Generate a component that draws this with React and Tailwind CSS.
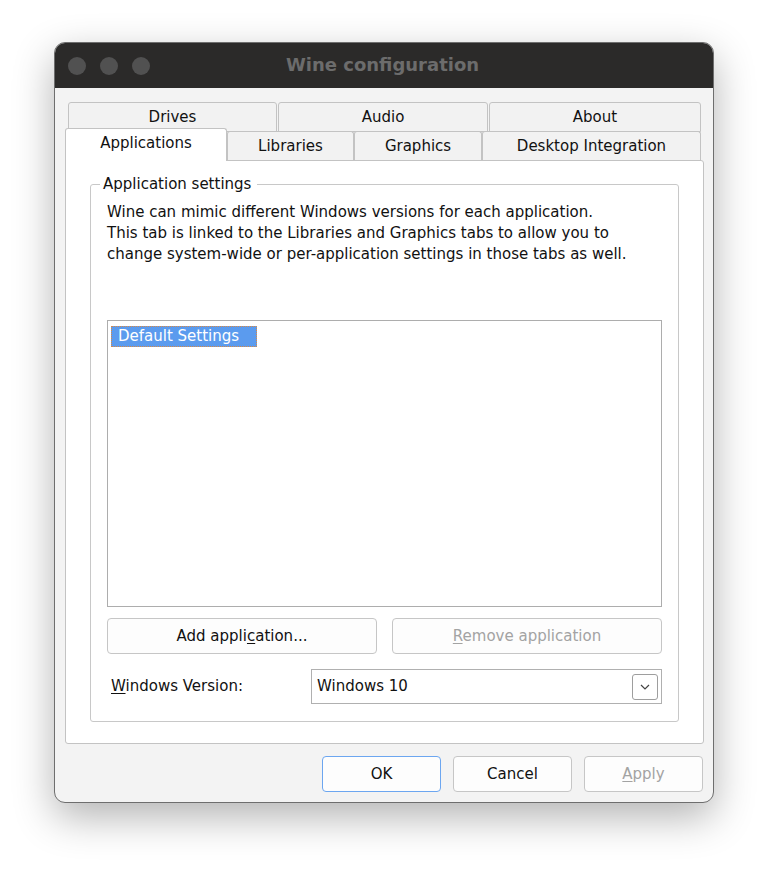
import React from 'react'

const font = { fontFamily: '"DejaVu Sans", Verdana, sans-serif' }

const BackTab = ({ label, w }) => (
  <div className={`${w} h-[30px] flex items-center justify-center bg-[#f2f2f2] border border-[#c3c3c3] rounded-t-[3px] text-[15px] text-[#111]`}>
    {label}
  </div>
)

const FrontTab = ({ label, w, active }) =>
  active ? (
    <div className={`${w} relative z-10 -mt-[3px] -mb-px h-[33px] flex items-start pt-[3px] justify-center bg-white border border-b-0 border-[#c3c3c3] rounded-t-[3px] text-[15px] text-[#111]`}>
      {label}
    </div>
  ) : (
    <div className={`${w} h-[29px] flex items-center justify-center bg-[#f2f2f2] border border-b-0 border-[#c3c3c3] rounded-t-[3px] text-[15px] text-[#111]`}>
      {label}
    </div>
  )

const Btn = ({ children, w, disabled, focus }) => (
  <div
    className={`${w} h-[36px] flex items-center justify-center rounded-[4px] border text-[15px] bg-[#fdfdfd] ${
      focus ? 'border-[#6ca6f0]' : 'border-[#c6c6c6]'
    } ${disabled ? 'text-[#a3a3a3]' : 'text-[#111]'}`}
  >
    {children}
  </div>
)

export default function App() {
  return (
    <div className="w-[768px] h-[871px] bg-white pt-[42px] pl-[54px]" style={font}>
      <div className="w-[660px] h-[761px] rounded-[11px] overflow-hidden border border-[#6e6e6e] bg-[#f3f3f3] shadow-[0_14px_40px_rgba(0,0,0,0.3)] flex flex-col">
        {/* title bar */}
        <div className="h-[45px] shrink-0 bg-[#2b2a29] grid grid-cols-[1fr_auto_1fr] items-center pb-[3px]">
          <div className="flex items-center gap-[14px] pl-[13px] pt-[3px]">
            <span className="w-[18px] h-[18px] rounded-full bg-[#515151]" />
            <span className="w-[18px] h-[18px] rounded-full bg-[#515151]" />
            <span className="w-[18px] h-[18px] rounded-full bg-[#515151]" />
          </div>
          <div className="text-[18px] font-bold text-[#6c6c6c] pr-[3px]">Wine configuration</div>
          <div />
        </div>

        {/* body */}
        <div className="flex-1 flex flex-col pt-[14px] pl-[10px] pr-[10px]">
          {/* tabs */}
          <div className="flex gap-px pl-[3px]">
            <BackTab label="Drives" w="w-[209px]" />
            <BackTab label="Audio" w="w-[210px]" />
            <BackTab label="About" w="w-[212px]" />
          </div>
          <div className="flex -mt-px items-end">
            <FrontTab label="Applications" w="w-[162px]" active />
            <FrontTab label="Libraries" w="w-[127px]" />
            <FrontTab label="Graphics" w="w-[128px]" />
            <FrontTab label="Desktop Integration" w="w-[219px]" />
          </div>

          {/* panel */}
          <div className="w-[639px] h-[584px] bg-white border border-[#c3c3c3] rounded-b-[3px] rounded-tr-[3px] px-[24px] pt-[13px]">
            <fieldset className="border border-[#c8c8c8] rounded-[3px] px-[16px] pb-[17px] h-[548px] flex flex-col">
              <legend className="-ml-[7px] pl-[3px] pr-[6px] text-[15px] leading-[21px] text-[#111]">
                Application settings
              </legend>
              <div className="mt-[7px] text-[15px] leading-[21px] text-[#111]">
                <p>Wine can mimic different Windows versions for each application.</p>
                <p>This tab is linked to the Libraries and Graphics tabs to allow you to</p>
                <p>change system-wide or per-application settings in those tabs as well.</p>
              </div>

              <div className="mt-[55px] h-[287px] border border-[#adadad] bg-white p-[3px]">
                <div className="inline-flex h-[21px] items-center bg-[#5b9bee] border border-dotted border-[#d98a45] pl-[6px] pr-[17px] text-[15px] text-white">
                  Default Settings
                </div>
              </div>

              <div className="mt-[11px] flex justify-between">
                <Btn w="w-[270px]">
                  <span>
                    Add appli<span className="underline underline-offset-2">c</span>ation...
                  </span>
                </Btn>
                <Btn w="w-[270px]" disabled>
                  <span>
                    <span className="underline underline-offset-2">R</span>emove application
                  </span>
                </Btn>
              </div>

              <div className="mt-[15px] flex items-center">
                <div className="w-[204px] pl-[4px] text-[15px] text-[#111]">
                  <span className="underline underline-offset-2">W</span>indows Version:
                </div>
                <div className="flex-1 h-[35px] border border-[#b0b0b0] bg-white flex items-center justify-between pl-[5px] pr-[3px] text-[15px] text-[#111]">
                  <span>Windows 10</span>
                  <div className="w-[26px] h-[26px] border border-[#9e9e9e] rounded-[3px] bg-white flex items-center justify-center">
                    <svg width="10" height="6" viewBox="0 0 10 6" fill="none">
                      <path d="M1 1l4 4 4-4" stroke="#444" strokeWidth="1.2" />
                    </svg>
                  </div>
                </div>
              </div>
            </fieldset>
          </div>

          {/* dialog buttons */}
          <div className="mt-[12px] flex justify-end gap-[12px]">
            <Btn w="w-[119px]" focus>OK</Btn>
            <Btn w="w-[119px]">Cancel</Btn>
            <Btn w="w-[119px]" disabled>
              <span>
                <span className="underline underline-offset-2">A</span>pply
              </span>
            </Btn>
          </div>
        </div>
      </div>
    </div>
  )
}
